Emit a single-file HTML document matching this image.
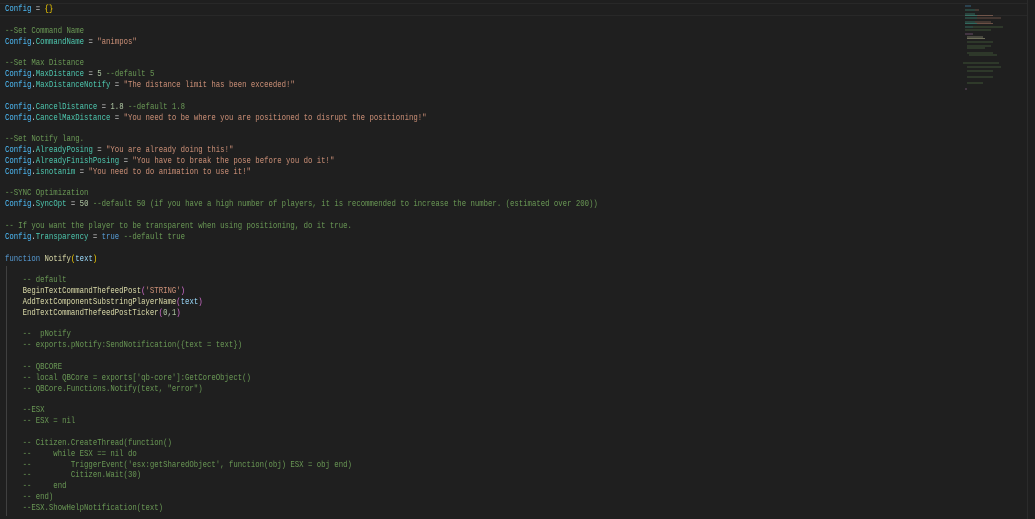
<!DOCTYPE html>
<html><head><meta charset="utf-8"><style>
html,body{margin:0;padding:0;background:#1f1f1f;width:1035px;height:519px;overflow:hidden}
#code{position:absolute;left:5px;top:4.1px;font-family:"Liberation Mono",monospace;font-size:9.3px;line-height:10.85px;color:#d4d4d4;white-space:pre;transform:scaleX(0.787);transform-origin:0 0}
.g{color:#4fc1ff}.t{color:#4ec9b0}.c{color:#6a9955}.s{color:#ce9178}.n{color:#b5cea8}.k{color:#569cd6}.f{color:#dcdcaa}.y{color:#ffd700}.p{color:#da70d6}.v{color:#9cdcfe}.kw{color:#c586c0}
#hl{position:absolute;left:0;top:3px;width:1027px;height:11px;border-top:1px solid #282828;border-bottom:1px solid #282828}
#guide{position:absolute;left:6px;top:266px;width:1px;height:250px;background:#404040}
#mini{position:absolute;left:963px;top:3px;width:40px;height:90px;opacity:0.55}
#sb{position:absolute;left:1027px;top:0;width:8px;height:519px;background:#1f1f1f;border-left:1px solid #2b2b2b}
</style></head><body>
<div id="hl"></div>
<div id="guide"></div>
<div id="code"><span class="g">Config</span> = <span class="y">{}</span>

<span class="c">--Set Command Name</span>
<span class="g">Config</span>.<span class="t">CommandName</span> = <span class="s">"animpos"</span>

<span class="c">--Set Max Distance</span>
<span class="g">Config</span>.<span class="t">MaxDistance</span> = <span class="n">5</span> <span class="c">--default 5</span>
<span class="g">Config</span>.<span class="t">MaxDistanceNotify</span> = <span class="s">"The distance limit has been exceeded!"</span>

<span class="g">Config</span>.<span class="t">CancelDistance</span> = <span class="n">1.8</span> <span class="c">--default 1.8</span>
<span class="g">Config</span>.<span class="t">CancelMaxDistance</span> = <span class="s">"You need to be where you are positioned to disrupt the positioning!"</span>

<span class="c">--Set Notify lang.</span>
<span class="g">Config</span>.<span class="t">AlreadyPosing</span> = <span class="s">"You are already doing this!"</span>
<span class="g">Config</span>.<span class="t">AlreadyFinishPosing</span> = <span class="s">"You have to break the pose before you do it!"</span>
<span class="g">Config</span>.<span class="t">isnotanim</span> = <span class="s">"You need to do animation to use it!"</span>

<span class="c">--SYNC Optimization</span>
<span class="g">Config</span>.<span class="t">SyncOpt</span> = <span class="n">50</span> <span class="c">--default 50 (if you have a high number of players, it is recommended to increase the number. (estimated over 200))</span>

<span class="c">-- If you want the player to be transparent when using positioning, do it true.</span>
<span class="g">Config</span>.<span class="t">Transparency</span> = <span class="k">true</span> <span class="c">--default true</span>

<span class="k">function</span> <span class="f">Notify</span><span class="y">(</span><span class="v">text</span><span class="y">)</span>

    <span class="c">-- default</span>
    <span class="f">BeginTextCommandThefeedPost</span><span class="p">(</span><span class="s">'STRING'</span><span class="p">)</span>
    <span class="f">AddTextComponentSubstringPlayerName</span><span class="p">(</span><span class="v">text</span><span class="p">)</span>
    <span class="f">EndTextCommandThefeedPostTicker</span><span class="p">(</span><span class="n">0</span>,<span class="n">1</span><span class="p">)</span>

    <span class="c">--  pNotify</span>
    <span class="c">-- exports.pNotify:SendNotification({text = text})</span>

    <span class="c">-- QBCORE</span>
    <span class="c">-- local QBCore = exports['qb-core']:GetCoreObject()</span>
    <span class="c">-- QBCore.Functions.Notify(text, "error")</span>

    <span class="c">--ESX</span>
    <span class="c">-- ESX = nil</span>

    <span class="c">-- Citizen.CreateThread(function()</span>
    <span class="c">--     while ESX == nil do</span>
    <span class="c">--         TriggerEvent('esx:getSharedObject', function(obj) ESX = obj end)</span>
    <span class="c">--         Citizen.Wait(30)</span>
    <span class="c">--     end</span>
    <span class="c">-- end)</span>
    <span class="c">--ESX.ShowHelpNotification(text)</span></div>
<svg id="mini" viewBox="0 0 40 90">
<g stroke-width="0.8">
<line x1="2" y1="3" x2="8" y2="3" stroke="#4fc1ff"/>
<line x1="2" y1="7" x2="12" y2="7" stroke="#4ec9b0"/><line x1="12" y1="7" x2="16" y2="7" stroke="#ce9178"/>
<line x1="2" y1="11" x2="12" y2="11" stroke="#4ec9b0"/><line x1="2" y1="12.5" x2="14" y2="12.5" stroke="#4ec9b0"/><line x1="14" y1="12.5" x2="30" y2="12.5" stroke="#ce9178"/>
<line x1="2" y1="15" x2="14" y2="15" stroke="#4ec9b0"/><line x1="14" y1="15" x2="38" y2="15" stroke="#ce9178"/>
<line x1="2" y1="19" x2="12" y2="19" stroke="#4ec9b0"/><line x1="12" y1="19" x2="28" y2="19" stroke="#ce9178"/>
<line x1="2" y1="20.5" x2="14" y2="20.5" stroke="#4ec9b0"/><line x1="14" y1="20.5" x2="30" y2="20.5" stroke="#ce9178"/>
<line x1="2" y1="24" x2="10" y2="24" stroke="#4ec9b0"/><line x1="10" y1="24" x2="40" y2="24" stroke="#6a9955"/>
<line x1="2" y1="27" x2="28" y2="27" stroke="#6a9955"/>
<line x1="2" y1="31" x2="10" y2="31" stroke="#c586c0"/>
<line x1="4" y1="34" x2="20" y2="34" stroke="#dcdcaa"/><line x1="4" y1="35.5" x2="22" y2="35.5" stroke="#dcdcaa"/>
<line x1="4" y1="39" x2="30" y2="39" stroke="#6a9955"/><line x1="4" y1="43" x2="28" y2="43" stroke="#6a9955"/><line x1="4" y1="45" x2="22" y2="45" stroke="#6a9955"/>
<line x1="4" y1="50" x2="30" y2="50" stroke="#6a9955"/><line x1="6" y1="52" x2="34" y2="52" stroke="#6a9955"/>
<line x1="0" y1="60" x2="36" y2="60" stroke="#6a9955"/><line x1="4" y1="64" x2="38" y2="64" stroke="#6a9955"/>
<line x1="4" y1="68" x2="30" y2="68" stroke="#6a9955"/><line x1="4" y1="74" x2="30" y2="74" stroke="#6a9955"/>
<line x1="4" y1="80" x2="20" y2="80" stroke="#6a9955"/><line x1="2" y1="86" x2="4" y2="86" stroke="#c586c0"/>
</g></svg>
<div id="sb"></div>
</body></html>
